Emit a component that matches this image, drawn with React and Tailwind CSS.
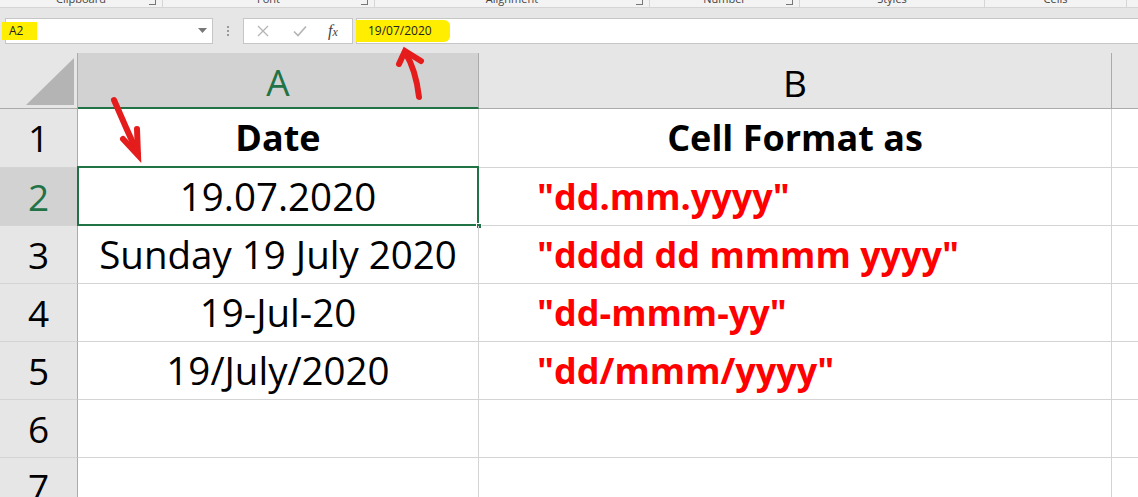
import React from 'react';

const groups = [
  { label: 'Clipboard', w: 163, launcher: true },
  { label: 'Font', w: 212, launcher: true },
  { label: 'Alignment', w: 275, launcher: true },
  { label: 'Number', w: 150, launcher: true },
  { label: 'Styles', w: 185, launcher: false },
  { label: 'Cells', w: 142, launcher: false },
];

const rows = [
  { n: 1, a: 'Date', b: 'Cell Format as', head: true, h: 'h-[59px]' },
  { n: 2, a: '19.07.2020', b: '"dd.mm.yyyy"', selected: true, h: 'h-[58px]' },
  { n: 3, a: 'Sunday 19 July 2020', b: '"dddd dd mmmm yyyy"', h: 'h-[58px]' },
  { n: 4, a: '19-Jul-20', b: '"dd-mmm-yy"', h: 'h-[58px]' },
  { n: 5, a: '19/July/2020', b: '"dd/mmm/yyyy"', h: 'h-[58px]' },
  { n: 6, a: '', b: '', h: 'h-[58px]' },
  { n: 7, a: '', b: '', h: 'h-[58px]' },
];

const Ribbon = () => (
  <div className="flex h-[8px] overflow-hidden bg-[#f3f3f3] border-b border-[#d5d5d5] font-['Open_Sans',sans-serif] text-[#444]">
    {groups.map((g) => (
      <div
        key={g.label}
        style={{ width: g.w }}
        className="relative flex shrink-0 items-end justify-center border-r border-[#d5d5d5]"
      >
        <span className="mb-[3px] text-[11px] leading-[11px]">{g.label}</span>
        {g.launcher && (
          <span className="absolute right-[6px] bottom-[2px] h-[7px] w-[7px] border-r border-b border-[#777]"></span>
        )}
      </div>
    ))}
  </div>
);

const FormulaBar = () => (
  <div className="bg-[#e6e6e6] pt-[10px] pb-[9px] font-['Open_Sans',sans-serif]">
    <div className="flex h-[26px] items-stretch">
      <div className="relative ml-[5px] flex w-[208px] items-center border border-[#c6c6c6] bg-white">
        <span className="ml-[-4px] flex h-[18px] items-center bg-[#ffee00] pl-[7px] pr-[14px] text-[12px] text-[#222]">
          A2
        </span>
        <svg className="absolute right-[5px] top-[9px]" width="9" height="6" viewBox="0 0 9 6">
          <path d="M0 0 H9 L4.5 5 Z" fill="#777" />
        </svg>
      </div>
      <div className="flex w-[30px] flex-col items-center justify-center gap-[2px]">
        <span className="h-[2px] w-[2px] bg-[#999]"></span>
        <span className="h-[2px] w-[2px] bg-[#999]"></span>
        <span className="h-[2px] w-[2px] bg-[#999]"></span>
      </div>
      <div className="flex w-[110px] items-center border border-[#c6c6c6] bg-white">
        <svg className="ml-[13px]" width="12" height="12" viewBox="0 0 12 12">
          <path d="M1 1 L11 11 M11 1 L1 11" stroke="#b4b4b4" strokeWidth="1.3" fill="none" />
        </svg>
        <svg className="ml-[24px]" width="14" height="12" viewBox="0 0 14 12">
          <path d="M1 6.5 L5 10.5 L13 1.5" stroke="#b4b4b4" strokeWidth="1.6" fill="none" />
        </svg>
        <span className="ml-[21px] font-['Liberation_Serif',serif] text-[16px] italic leading-none text-[#444]">
          f<span className="text-[12px]">x</span>
        </span>
      </div>
      <div className="ml-[3px] flex flex-1 items-center border-y border-l border-[#c6c6c6] bg-white">
        <span className="ml-[-1px] flex h-[22px] items-center rounded-r-[6px] bg-[#ffee00] pl-[12px] pr-[18px] text-[12px] text-[#222]">
          19/07/2020
        </span>
      </div>
    </div>
  </div>
);

const Arrows = () => (
  <svg className="pointer-events-none absolute inset-0" width="1138" height="497">
    <g stroke="#e51c1c" strokeWidth="6" strokeLinecap="round" fill="none">
      <path d="M114 100 Q126 128 138 154" />
      <path d="M123 139 L138 155 L137 129" />
      <path d="M419 97 Q416 70 405 52" />
      <path d="M399 64 L405 51 L421 61" />
    </g>
  </svg>
);

export default function App() {
  return (
    <div className="relative h-[497px] w-[1138px] overflow-hidden bg-[#e6e6e6] font-['Open_Sans',sans-serif]">
      <Ribbon />
      <FormulaBar />
      <div className="grid grid-cols-[78px_401px_633px_1fr] bg-white">
        {/* header row */}
        <div className="relative h-[56px] border-r border-b border-[#ababab] bg-[#e6e6e6]">
          <svg className="absolute right-[3px] bottom-[3px]" width="48" height="47" viewBox="0 0 48 47">
            <path d="M48 0 V47 H0 Z" fill="#b4b4b4" />
          </svg>
        </div>
        <div className="flex h-[56px] items-center justify-center border-r border-b-2 border-r-[#ababab] border-b-[#217346] bg-[#d2d2d2] pt-[4px] text-[37px] text-[#217346]">
          A
        </div>
        <div className="flex h-[56px] items-center justify-center border-r border-b border-[#ababab] bg-[#e6e6e6] pt-[4px] text-[37px] text-black">
          B
        </div>
        <div className="h-[56px] border-b border-[#ababab] bg-[#e6e6e6]"></div>

        {rows.map((r) => (
          <React.Fragment key={r.n}>
            <div
              className={`flex ${r.h} items-center justify-center border-r border-b border-r-[#ababab] border-b-[#d4d4d4] text-[37px] ${
                r.selected ? 'bg-[#d2d2d2] text-[#217346]' : 'bg-[#e6e6e6] text-black'
              }`}
            >
              {r.n}
            </div>
            <div
              className={`relative flex ${r.h} items-center justify-center border-r border-b border-[#d4d4d4] text-black ${
                r.head ? 'text-[36px] font-bold' : 'text-[38.5px]'
              }`}
            >
              {r.a}
              {r.selected && (
                <>
                  <div className="absolute -top-[2px] -left-px -right-px -bottom-px border-2 border-[#217346]"></div>
                  <div className="absolute -right-[4px] -bottom-[4px] h-[6px] w-[6px] border border-white bg-[#217346]"></div>
                </>
              )}
            </div>
            <div
              className={`flex ${r.h} items-center border-r border-b border-[#d4d4d4] text-[36px] font-bold ${
                r.head ? 'justify-center pl-[0px] text-black' : 'pl-[58px] text-[#ff0000]'
              }`}
            >
              {r.b}
            </div>
            <div className={`${r.h} border-b border-[#d4d4d4]`}></div>
          </React.Fragment>
        ))}
      </div>
      <Arrows />
    </div>
  );
}
